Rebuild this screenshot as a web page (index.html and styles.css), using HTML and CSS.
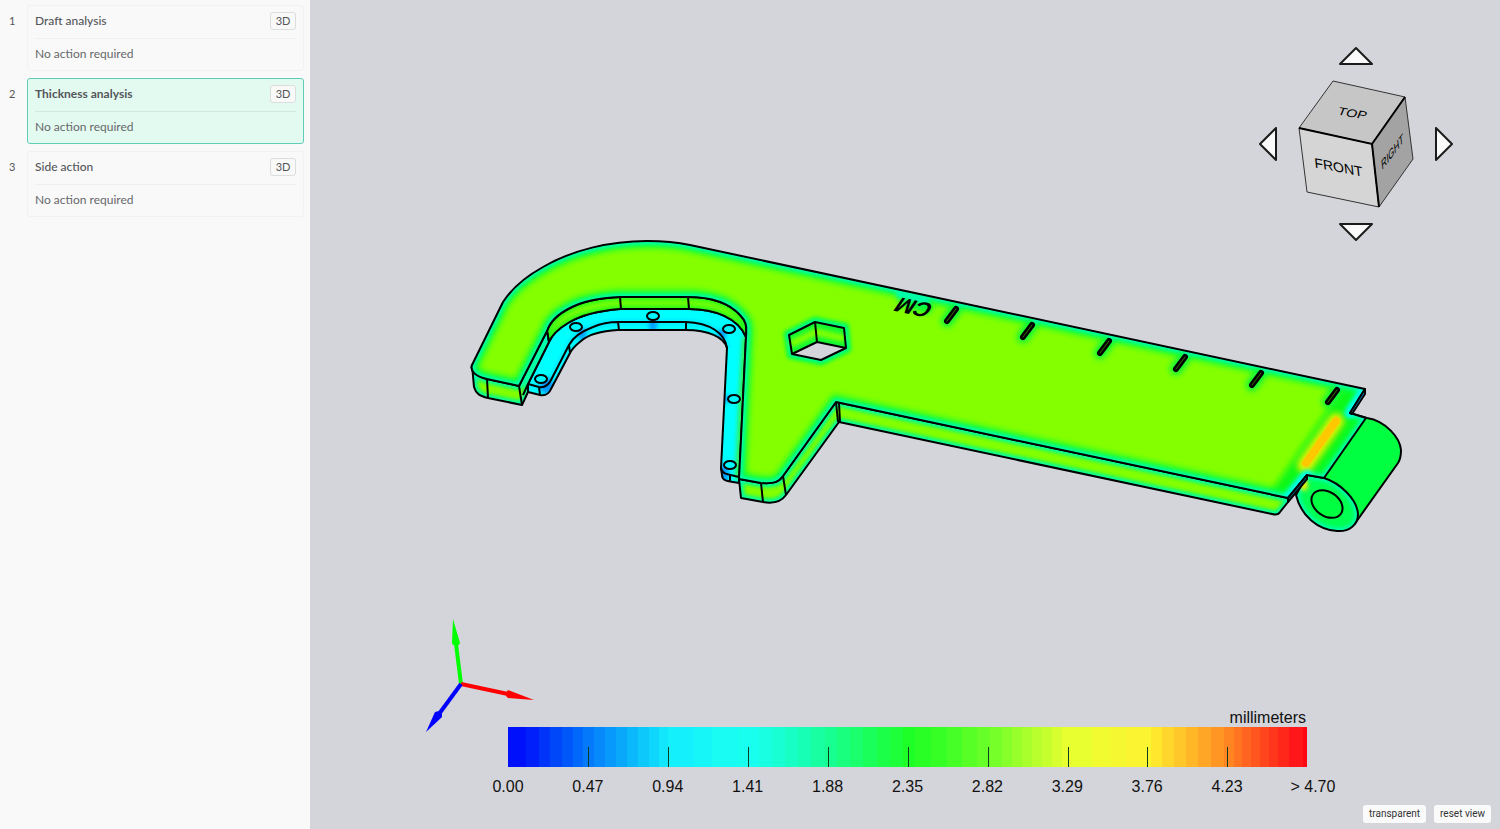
FILE: index.html
```html
<!DOCTYPE html>
<html lang="en">
<head>
  <meta charset="UTF-8">
  <meta name="viewport" content="width=device-width, initial-scale=1.0">
  <title>Thickness analysis</title>
  <link rel="stylesheet" href="styles.css">
</head>
<body>
  <aside class="sidebar">
    <ol class="checks">
      <li class="check">
        <span class="check-number">1</span>
        <div class="card">
          <div class="card-head">
            <h2>Draft analysis</h2>
            <button class="badge" type="button">3D</button>
          </div>
          <p>No action required</p>
        </div>
      </li>
      <li class="check active">
        <span class="check-number">2</span>
        <div class="card">
          <div class="card-head">
            <h2>Thickness analysis</h2>
            <button class="badge" type="button">3D</button>
          </div>
          <p>No action required</p>
        </div>
      </li>
      <li class="check">
        <span class="check-number">3</span>
        <div class="card">
          <div class="card-head">
            <h2>Side action</h2>
            <button class="badge" type="button">3D</button>
          </div>
          <p>No action required</p>
        </div>
      </li>
    </ol>
  </aside>

  <main class="viewer">
    <svg class="model" viewBox="310 0 1190 829">
      <defs>
        <filter id="soft" x="-100%" y="-100%" width="300%" height="300%"><feGaussianBlur stdDeviation="3"/></filter>
        <filter id="fine" x="-100%" y="-100%" width="300%" height="300%"><feGaussianBlur stdDeviation="2"/></filter>
        <path id="top" d="M472 365 L503 302 C512 288 525 277 543 267 C572 250 610 241 647 241 C662 241 676 242 690 245 L1365 389 L1350 413 L1366 418 L1324 478 L1307 475 L1288 498 L836 402 L783 476 C779 482 774 484 761 483 L739 479 L746 337 C747 325 746 321 740 315 C729 303 710 297 688 297 H620 C600 298 583 301 570 308 C558 314 550 322 547 331 L519 386 L487 379 C475 376 470 371 472 365 Z"/>
        <path id="side-left" d="M472 365 L474 387 C476 394 480 396 488 398 L522 405 L528 392 L528 384 L549 342 L547 331 L519 386 L487 379 C475 376 470 371 472 365 Z"/>
        <path id="side-right" d="M739 479 L741 498 L763 502 C774 504 781 502 786 495 L839 422 L1272 514 C1276 515 1279 514 1280 512 L1288 502 V498 L836 402 L783 476 C779 482 774 484 761 483 Z"/>
        <path id="wall" d="M547 331 C550 322 558 314 570 308 C583 301 600 298 620 297 H688 C710 297 729 303 740 315 C746 321 747 325 746 337 C738 318 715 309 689 309 H620 C596 311 581 315 568 323 C558 329 552 335 549 342 Z"/>
        <path id="ledge" d="M528 384 L549 342 C552 335 558 329 568 323 C581 315 596 311 620 309 H689 C715 309 738 318 746 337 L739 483 C730 481 722 482 722 475 L721 468 L727 348 C724 337 708 330 686 330 H618 C600 331 589 334 581 341 C576 345 572 349 570 353 L551 389 C549 394 546 396 540 395 L528 392 Z"/>
        <path id="ring" d="M1307 475 L1324 478 C1340 483 1357 499 1358 514 C1358 525 1349 532 1337 531 C1318 530 1301 516 1296 495 Z"/>
        <clipPath id="clip-top"><use href="#top"/></clipPath>
        <clipPath id="clip-left"><use href="#side-left"/></clipPath>
        <clipPath id="clip-right"><use href="#side-right"/></clipPath>
        <clipPath id="clip-wall"><use href="#wall"/></clipPath>
        <clipPath id="clip-ledge"><use href="#ledge"/></clipPath>
        <clipPath id="clip-ring"><use href="#ring"/></clipPath>
      </defs>

      <!-- hinge barrel -->
      <path class="barrel" d="M1350 413 L1367 418 C1386 421 1400 438 1401 450 C1401 456 1400 460 1398 463 L1356 522 L1324 478 Z"/>
      <g clip-path="url(#clip-ring)">
        <use href="#ring" class="ring"/>
        <use href="#ring" class="heat-cyan" filter="url(#fine)"/>
        <ellipse class="spot-yellow" cx="1304" cy="485" rx="4" ry="6" filter="url(#fine)"/>
      </g>
      <use href="#ring" class="edge"/>
      <ellipse class="bore" cx="1327" cy="504" rx="17" ry="12" transform="rotate(35 1327 504)"/>

      <!-- thin ledge inside the hook -->
      <g clip-path="url(#clip-ledge)">
        <use href="#ledge" class="ledge"/>
        <path class="ledge-side" d="M528 384 L539 387 C545 388 549 384 551 380 L569 345 C573 337 580 332 593 327 C600 324 608 322 618 322 H686 C710 323 725 333 727 348"/>
        <g class="spot-blue" filter="url(#fine)">
          <ellipse cx="547" cy="386" rx="7" ry="8"/>
          <ellipse cx="582" cy="334" rx="4" ry="6"/>
          <ellipse cx="653" cy="325" rx="4" ry="7"/>
          <ellipse cx="722" cy="334" rx="4" ry="5"/>
          <ellipse cx="727" cy="399" rx="3" ry="4"/>
          <ellipse cx="724" cy="473" rx="5" ry="9"/>
        </g>
        <path class="ledge-glow" d="M746 337 L739 480" filter="url(#fine)"/>
      </g>
      <use href="#ledge" class="edge"/>
      <path class="edge" d="M528 384 L539 387 C545 388 549 384 551 380 L569 345 C573 337 580 332 593 327 C600 324 608 322 618 322 H686 C710 323 725 333 727 348 M721 468 C722 475 729 474 739 477 M539 387 L540 395 M569 345 L570 353 M618 322 L619 330 M686 322 V330 M730 475 V482"/>
      <g class="pin">
        <ellipse cx="576" cy="327" rx="6" ry="4"/>
        <ellipse cx="653" cy="316" rx="6" ry="4"/>
        <ellipse cx="729" cy="329" rx="6" ry="4"/>
        <ellipse cx="541" cy="379" rx="6" ry="4"/>
        <ellipse cx="734" cy="399" rx="6" ry="4"/>
        <ellipse cx="730" cy="465" rx="6" ry="4"/>
      </g>

      <!-- side walls -->
      <g clip-path="url(#clip-wall)">
        <use href="#wall" class="face"/>
        <use href="#wall" class="heat-side" filter="url(#fine)"/>
      </g>
      <g clip-path="url(#clip-left)">
        <use href="#side-left" class="face"/>
        <use href="#side-left" class="heat-side" filter="url(#fine)"/>
        <use href="#side-left" class="heat-cyan" filter="url(#fine)"/>
      </g>
      <g clip-path="url(#clip-right)">
        <use href="#side-right" class="face"/>
        <use href="#side-right" class="heat-side" filter="url(#fine)"/>
        <use href="#side-right" class="heat-cyan" filter="url(#fine)"/>
      </g>
      <use href="#wall" class="edge"/>
      <use href="#side-left" class="edge"/>
      <use href="#side-right" class="edge"/>
      <path class="edge" d="M487 379 L488 398 M519 386 L522 405 M523 395 L528 384 M620 297 L621 309 M688 297 L689 309 M761 483 L763 502 M783 476 L786 495 M836 402 L838 422 M839 403 L840 422"/>

      <!-- top face with its heat map -->
      <g clip-path="url(#clip-top)">
        <use href="#top" class="face"/>
        <path class="hinge-green" d="M1370 380 L1270 525" filter="url(#soft)"/>
        <use href="#top" class="heat-green" filter="url(#soft)"/>
        <use href="#top" class="heat-cyan" filter="url(#fine)"/>
        <path class="hinge-yellow" d="M1336 421 L1305 465" filter="url(#soft)"/>
        <path class="hinge-orange" d="M1336 421 L1306 463"/>
        <path class="tip-cyan" d="M1365 389 L1350 413 M1307 475 L1288 498" filter="url(#fine)"/>
        <path class="mark-glow" d="M905 301 L927 307 M956 309 L947 321 M1032 325 L1023 337 M1109 341 L1100 353 M1185 357 L1176 369 M1261 373 L1252 385 M1337 390 L1328 402" filter="url(#soft)"/>
        <path class="mark-cyan" d="M900 294 L926 300 M960 302 V303 M1036 318 V319 M1112 335 V336 M1188 351 V352 M1265 367 V368 M1340 383 V384" filter="url(#fine)"/>
        <path class="hex-green" d="M789 335 L815 322 L844 328 L846 348 L821 360 L792 354 Z" filter="url(#fine)"/>
        <path class="hex-cyan" d="M789 335 L815 322 L844 328 L846 348 L821 360 L792 354 Z" filter="url(#fine)"/>
      </g>
      <use href="#top" class="edge"/>
      <path class="tip" d="M1365 389 V394 L1352 414 L1350 413 Z M1307 475 V479 L1288 502 V498 Z"/>

      <!-- hex hole -->
      <path class="hex-wall" d="M789 335 L815 322 L844 328 L846 348 L817 342 L792 354 Z"/>
      <path class="hex-mid" d="M793 343 L816 332 L842 338" filter="url(#fine)"/>
      <path class="hex-open" d="M792 354 L817 342 L846 348 L821 360 Z"/>
      <path class="edge" d="M789 335 L815 322 L844 328 L846 348 L821 360 L792 354 Z M792 354 L817 342 L846 348 M815 322 L817 342"/>

      <!-- ruler marks -->
      <path class="mark" d="M956 309 L947 321 M1032 325 L1023 337 M1109 341 L1100 353 M1185 357 L1176 369 M1261 373 L1252 385 M1337 390 L1328 402"/>
      <path class="mark-core" d="M956 309 L947 321 M1032 325 L1023 337 M1109 341 L1100 353 M1185 357 L1176 369 M1261 373 L1252 385 M1337 390 L1328 402"/>
      <text class="engraving" transform="matrix(-1 -.21 .6 -.86 918 301)">CM</text>
    </svg>

    <div class="nav-cube">
      <button class="turn up" type="button" aria-label="Rotate up"><svg width="34" height="18"><path d="M17 1 L33 17 H1 Z"/></svg></button>
      <button class="turn left" type="button" aria-label="Rotate left"><svg width="18" height="34"><path d="M1 17 L17 1 V33 Z"/></svg></button>
      <svg class="cube" viewBox="0 0 158 158">
        <path class="cube-top" d="M56 16 L128 32 L95 79 L22 63 Z"/>
        <path class="cube-front" d="M22 63 L95 79 L102 142 L30 127 Z"/>
        <path class="cube-right" d="M95 79 L128 32 L136 94 L102 142 Z"/>
        <path class="cube-ridge" d="M22 63 L95 79 L128 32 M95 79 L102 142"/>
        <text transform="matrix(1 .17 -.3 .76 74 52)">TOP</text>
        <text transform="matrix(1 .19 .11 .98 62 107)">FRONT</text>
        <text transform="matrix(.5 -.66 .11 .9 116 91)">RIGHT</text>
      </svg>
      <button class="turn right" type="button" aria-label="Rotate right"><svg width="18" height="34"><path d="M17 17 L1 1 V33 Z"/></svg></button>
      <button class="turn down" type="button" aria-label="Rotate down"><svg width="34" height="18"><path d="M17 17 L33 1 H1 Z"/></svg></button>
    </div>

    <svg class="axes" viewBox="0 0 120 124">
      <g class="axis-y"><path class="shaft" d="M41 70 L36 30"/><path class="head" d="M33 5 L40 29 L39 31 L33 31 L32 29 Z"/></g>
      <g class="axis-x"><path class="shaft" d="M41 70 L88 80"/><path class="head" d="M114 86 L88 76 L86 79 L86 82 L88 84 Z"/></g>
      <g class="axis-z"><path class="shaft" d="M41 70 L19 100"/><path class="head" d="M6 118 L15 98 L19 97 L22 100 L22 103 Z"/></g>
    </svg>

    <section class="legend">
      <div class="unit">millimeters</div>
      <svg class="bar" viewBox="0 0 799 40" preserveAspectRatio="none" shape-rendering="crispEdges">
        <rect x="0" width="18" height="40" fill="#0010fa"/>
        <rect x="18" width="13" height="40" fill="#001ffa"/>
        <rect x="31" width="11" height="40" fill="#0034fa"/>
        <rect x="42" width="12" height="40" fill="#0047fa"/>
        <rect x="54" width="11" height="40" fill="#0058fa"/>
        <rect x="65" width="10" height="40" fill="#0069fb"/>
        <rect x="75" width="11" height="40" fill="#047afb"/>
        <rect x="86" width="11" height="40" fill="#068afb"/>
        <rect x="97" width="11" height="40" fill="#0799fb"/>
        <rect x="108" width="11" height="40" fill="#09a8fb"/>
        <rect x="119" width="11" height="40" fill="#0bb8fb"/>
        <rect x="130" width="11" height="40" fill="#0dc8fb"/>
        <rect x="141" width="10" height="40" fill="#0fd6fc"/>
        <rect x="151" width="9" height="40" fill="#12e6fd"/>
        <rect x="160" width="26" height="40" fill="#14f1fc"/>
        <rect x="186" width="18" height="40" fill="#16f6f8"/>
        <rect x="204" width="26" height="40" fill="#18fcf4"/>
        <rect x="230" width="21" height="40" fill="#18fff0"/>
        <rect x="251" width="13" height="40" fill="#18ffe2"/>
        <rect x="264" width="13" height="40" fill="#17ffd3"/>
        <rect x="277" width="13" height="40" fill="#17ffc5"/>
        <rect x="290" width="13" height="40" fill="#17ffb5"/>
        <rect x="303" width="14" height="40" fill="#18ffa2"/>
        <rect x="317" width="12" height="40" fill="#18ff91"/>
        <rect x="329" width="13" height="40" fill="#19ff7e"/>
        <rect x="342" width="13" height="40" fill="#1aff6c"/>
        <rect x="355" width="14" height="40" fill="#1aff5a"/>
        <rect x="369" width="13" height="40" fill="#1bff48"/>
        <rect x="382" width="13" height="40" fill="#1dff38"/>
        <rect x="395" width="12" height="40" fill="#1eff28"/>
        <rect x="407" width="16" height="40" fill="#29ff24"/>
        <rect x="423" width="16" height="40" fill="#36ff26"/>
        <rect x="439" width="15" height="40" fill="#45ff27"/>
        <rect x="454" width="15" height="40" fill="#57ff27"/>
        <rect x="469" width="13" height="40" fill="#67ff28"/>
        <rect x="482" width="12" height="40" fill="#77ff29"/>
        <rect x="494" width="10" height="40" fill="#87ff2a"/>
        <rect x="504" width="10" height="40" fill="#98ff2b"/>
        <rect x="514" width="10" height="40" fill="#a8ff2c"/>
        <rect x="524" width="10" height="40" fill="#b8ff2d"/>
        <rect x="534" width="10" height="40" fill="#c7ff2e"/>
        <rect x="544" width="10" height="40" fill="#d7ff2f"/>
        <rect x="554" width="30" height="40" fill="#e8ff30"/>
        <rect x="584" width="19" height="40" fill="#f1fb30"/>
        <rect x="603" width="15" height="40" fill="#f5f830"/>
        <rect x="618" width="25" height="40" fill="#fbf430"/>
        <rect x="643" width="11" height="40" fill="#ffe72e"/>
        <rect x="654" width="12" height="40" fill="#ffd72c"/>
        <rect x="666" width="12" height="40" fill="#ffc72a"/>
        <rect x="678" width="12" height="40" fill="#ffb728"/>
        <rect x="690" width="13" height="40" fill="#ffa626"/>
        <rect x="703" width="13" height="40" fill="#ff9624"/>
        <rect x="716" width="10" height="40" fill="#ff8422"/>
        <rect x="726" width="8" height="40" fill="#ff7421"/>
        <rect x="734" width="9" height="40" fill="#ff6520"/>
        <rect x="743" width="9" height="40" fill="#ff551e"/>
        <rect x="752" width="9" height="40" fill="#ff451c"/>
        <rect x="761" width="9" height="40" fill="#ff361b"/>
        <rect x="770" width="11" height="40" fill="#ff271a"/>
        <rect x="781" width="14" height="40" fill="#ff1719"/>
        <rect x="795" width="4" height="40" fill="#ff0814"/>
        <path class="ticks" d="M80 20 V40 M160 20 V40 M240 20 V40 M320 20 V40 M400 20 V40 M480 20 V40 M560 20 V40 M639 20 V40 M719 20 V40"/>
      </svg>
      <ul class="scale">
        <li><span>0.00</span></li>
        <li><span>0.47</span></li>
        <li><span>0.94</span></li>
        <li><span>1.41</span></li>
        <li><span>1.88</span></li>
        <li><span>2.35</span></li>
        <li><span>2.82</span></li>
        <li><span>3.29</span></li>
        <li><span>3.76</span></li>
        <li><span>4.23</span></li>
        <li><span class="over">&gt; 4.70</span></li>
      </ul>
    </section>

    <div class="view-actions">
      <button type="button">transparent</button>
      <button type="button">reset view</button>
    </div>
  </main>
</body>
</html>
```

FILE: styles.css
```css
* {
  box-sizing: border-box;
}
body {
  margin: 0;
  min-height: 100vh;
  display: flex;
  background-color: #d4d5da;
  font-family: Lato, sans-serif;
  color: #54565a;
}
button {
  font-family: inherit;
  color: inherit;
  cursor: pointer;
}

/* sidebar */
.sidebar {
  flex: 0 0 310px;
  padding: 5px 6px 5px 0;
  background-color: #f9f9f9;
}
.checks {
  margin: 0;
  padding: 0;
  list-style: none;
  display: flex;
  flex-direction: column;
  gap: 7px;
}
.check {
  display: flex;
}
.check-number {
  width: 27px;
  padding-left: 9px;
  padding-top: 7px;
  font-size: 11px;
  line-height: 18px;
}
.card {
  flex: 1;
  padding: 6px 7px 2px;
  border: 1px solid #f1f2f2;
  border-radius: 3px;
}
.card-head {
  display: flex;
  justify-content: space-between;
  padding-bottom: 8px;
  border-bottom: 1px solid #eeefef;
}
.card h2 {
  margin: 0;
  font-size: 12px;
  font-weight: 500;
  line-height: 18px;
}
.card p {
  margin: 0;
  font-size: 12px;
  line-height: 29px;
  color: #66686b;
}
.badge {
  width: 26px;
  height: 18px;
  padding: 0;
  border: 1px solid #dcdddd;
  border-radius: 3px;
  background-color: #f9f9f9;
  font-size: 11px;
  line-height: 16px;
}
.active .card {
  background-color: #e3faf0;
  border-color: #5fcdb5;
}
.active .card-head {
  border-color: #d0e8de;
}
.card-head h2 {
  white-space: nowrap;
}
.active h2 {
  font-weight: 700;
}

/* viewer */
.viewer {
  flex: 1;
  position: relative;
  overflow: hidden;
}
.model {
  position: absolute;
  width: 100%;
  height: 100%;
}
.edge {
  fill: none;
  stroke: #000;
  stroke-width: 2;
  stroke-linejoin: round;
}
.face {
  fill: #84ff00;
}
.heat-green {
  fill: none;
  stroke: #00ff38;
  stroke-width: 13;
}
.heat-side {
  fill: none;
  stroke: #20f81c;
  stroke-width: 7;
}
.heat-cyan {
  fill: none;
  stroke: #00ffc0;
  stroke-width: 6;
}
.barrel {
  fill: #00ff40;
  stroke: #000;
  stroke-width: 2;
}
.ring {
  fill: #00ff50;
}
.bore {
  fill: #00ff40;
  stroke: #000;
  stroke-width: 2;
}
.spot-yellow {
  fill: #f4e800;
}
.ledge {
  fill: #00ffff;
}
.ledge-side {
  fill: none;
  stroke: #00f4ff;
  stroke-width: 8;
}
.ledge-glow {
  fill: none;
  stroke: #30f050;
  stroke-width: 8;
}
.spot-blue {
  fill: #0098ff;
}
.pin {
  fill: #00f8ff;
  stroke: #000;
  stroke-width: 2;
}
.hinge-green,
.hinge-yellow,
.hinge-orange,
.tip-cyan,
.mark,
.mark-core,
.mark-glow,
.mark-cyan,
.hex-green,
.hex-cyan,
.hex-mid {
  fill: none;
  stroke-linecap: round;
}
.hinge-green {
  stroke: #10f818;
  stroke-width: 36;
}
.hinge-yellow {
  stroke: #e8f000;
  stroke-width: 16;
}
.hinge-orange {
  stroke: #ffc800;
  stroke-width: 8;
}
.tip-cyan {
  stroke: #00ffe8;
  stroke-width: 10;
}
.tip {
  fill: #00aaf0;
  stroke: #000;
  stroke-width: 2;
  stroke-linejoin: round;
}
.mark-glow {
  stroke: #00f83c;
  stroke-width: 12;
}
.mark-cyan {
  stroke: #00ffb0;
  stroke-width: 8;
}
.mark {
  stroke: #000;
  stroke-width: 6;
}
.mark-core {
  stroke: #3c7000;
  stroke-width: 1;
}
.engraving {
  font: bold 22px "Liberation Sans", sans-serif;
  text-anchor: middle;
  fill: #000;
}
.hex-green {
  stroke: #00ff38;
  stroke-width: 10;
}
.hex-cyan {
  stroke: #00ffb4;
  stroke-width: 5;
}
.hex-wall {
  fill: #10f834;
}
.hex-mid {
  stroke: #84ff00;
  stroke-width: 7;
}
.hex-open {
  fill: #d4d5da;
}

/* orientation cube */
.nav-cube {
  position: absolute;
  top: 47px;
  right: 47px;
  display: grid;
  grid-template-columns: 18px 158px 18px;
  grid-template-rows: 18px 158px 18px;
  place-items: center;
}
.turn {
  display: flex;
  padding: 0;
  border: none;
  background: none;
}
.turn path {
  fill: #fafafa;
  stroke: #1a1c1c;
  stroke-width: 2;
  stroke-linejoin: round;
}
.up,
.down {
  grid-column: 1 / 4;
}
.cube {
  width: 158px;
  height: 158px;
  stroke: #333;
  stroke-width: 1;
}
.cube-top {
  fill: #c6c6c6;
}
.cube-front {
  fill: #d5d5d5;
}
.cube-right {
  fill: #a3a3a3;
}
.cube-ridge {
  fill: none;
  stroke: #000;
  stroke-width: 2;
}
.cube text {
  font: 14px "Liberation Sans", sans-serif;
  text-anchor: middle;
  fill: #000;
  stroke: none;
}

/* axis triad */
.axes {
  position: absolute;
  left: 110px;
  bottom: 91px;
  width: 120px;
  height: 124px;
}
.shaft {
  fill: none;
  stroke-width: 4;
}
.axis-x {
  fill: #f00;
  stroke: #f00;
}
.axis-y {
  fill: #0f0;
  stroke: #0f0;
}
.axis-z {
  fill: #00f;
  stroke: #00f;
}
.head {
  stroke: none;
}

/* colour scale */
.legend {
  position: absolute;
  left: 198px;
  right: 193px;
  bottom: 33px;
  font-family: "Liberation Sans", sans-serif;
  font-size: 16px;
  line-height: 18px;
  color: #111;
}
.unit {
  text-align: right;
  padding-right: 1px;
}
.bar {
  display: block;
  width: 100%;
  height: 40px;
}
.ticks {
  stroke: #0b3d20;
  stroke-width: 1;
}
.scale {
  display: flex;
  justify-content: space-between;
  margin: 11px 0 0;
  padding: 0;
  list-style: none;
}
.scale li {
  display: flex;
  justify-content: center;
  width: 0;
  white-space: nowrap;
}
.over {
  margin-left: 12px;
}

.view-actions {
  position: absolute;
  right: 9px;
  bottom: 6px;
  display: flex;
  gap: 8px;
}
.view-actions button {
  height: 18px;
  padding: 0 6px;
  border: none;
  border-radius: 3px;
  background-color: #fafafa;
  font-family: Roboto, sans-serif;
  font-size: 10px;
  line-height: 18px;
  color: #333;
}
```
